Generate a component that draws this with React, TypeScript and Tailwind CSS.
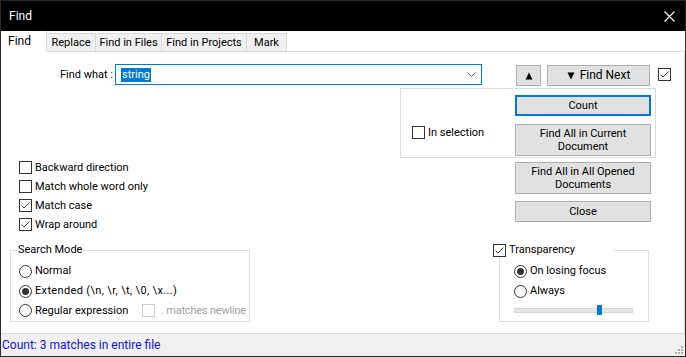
import React from 'react';

const Check = ({ checked, disabled }: { checked?: boolean; disabled?: boolean }) => (
  <span
    className={
      disabled
        ? 'flex h-[13px] w-[13px] shrink-0 items-center justify-center border border-[#cccccc] bg-white'
        : 'flex h-[13px] w-[13px] shrink-0 items-center justify-center border border-[#333333] bg-white'
    }
  >
    {checked && (
      <svg width="11" height="11" viewBox="0 0 11 11">
        <polyline points="1.5,5.5 4,8 9.5,2.5" fill="none" stroke="#3a3a3a" strokeWidth="1" />
      </svg>
    )}
  </span>
);

const Radio = ({ on }: { on?: boolean }) => (
  <span className="flex h-[13px] w-[13px] shrink-0 items-center justify-center rounded-full border border-[#333333] bg-white">
    {on && <span className="h-[7px] w-[7px] rounded-full bg-[#333333]" />}
  </span>
);

const Btn = ({ children, className }: { children: React.ReactNode; className: string }) => (
  <div className={`flex items-center justify-center whitespace-nowrap text-center leading-[13px] ${className}`}>{children}</div>
);

const Row = ({ children }: { children: React.ReactNode }) => (
  <div className="flex h-[19px] items-center gap-[3px] whitespace-nowrap">{children}</div>
);

export default function App() {
  const tabs = [
    { label: 'Replace', w: 'w-[49px]' },
    { label: 'Find in Files', w: 'w-[66px]' },
    { label: 'Find in Projects', w: 'w-[85px]' },
    { label: 'Mark', w: 'w-[40px]' },
  ];

  return (
    <div className="flex h-[357px] w-[686px] flex-col overflow-hidden border border-[#2b2b2b] bg-white font-['Roboto',sans-serif] text-[11px] leading-[16px] text-black">
      {/* title bar */}
      <div className="flex h-[30px] shrink-0 items-center justify-between bg-black pl-[8px] pr-[10px] text-[12px] text-white">
        <span>Find</span>
        <svg width="11" height="11" viewBox="0 0 11 11">
          <path d="M0.5 0.5 L10.5 10.5 M10.5 0.5 L0.5 10.5" stroke="#ffffff" strokeWidth="1.1" />
        </svg>
      </div>

      {/* tabs */}
      <div className="flex h-[20px] shrink-0 items-end whitespace-nowrap">
        <div className="relative z-10 mb-[-1px] flex h-[21px] w-[46px] items-center border-r border-[#d9d9d9] bg-white pl-[7px] pb-[2px] text-[12px]">
          Find
        </div>
        {tabs.map((t) => (
          <div
            key={t.label}
            className={`flex h-[18px] items-center justify-center border-t border-r border-[#d9d9d9] bg-[#f0f0f0] ${t.w}`}
          >
            {t.label}
          </div>
        ))}
      </div>

      {/* panel */}
      <div className="flex flex-1 flex-col border-t border-r border-[#d9d9d9]">
        {/* find what row */}
        <div className="mt-[12px] flex h-[21px] items-start whitespace-nowrap">
          <div className="flex h-[21px] w-[112px] items-center justify-end">Find what :</div>
          <div className="ml-[2px] flex h-[21px] w-[367px] items-center justify-between border border-[#0078d7] pl-[5px] pr-[5px]">
            <span className="bg-[#0078d7] px-[1px] leading-[14px] text-white">string</span>
            <svg width="9" height="5" viewBox="0 0 9 5">
              <polyline points="0.5,0.5 4.5,4.5 8.5,0.5" fill="none" stroke="#606060" strokeWidth="1" />
            </svg>
          </div>
          <Btn className="ml-[34px] mt-[1px] h-[21px] w-[25px] border border-[#adadad] bg-[#e1e1e1]">
            <svg width="8" height="8" viewBox="0 0 8 8">
              <polygon points="4,0.5 7.5,7.5 0.5,7.5" fill="#000000" />
            </svg>
          </Btn>
          <Btn className="ml-[6px] mt-[1px] h-[21px] w-[103px] gap-[5px] border border-[#adadad] bg-[#e1e1e1] text-[12px]">
            <svg width="8" height="8" viewBox="0 0 8 8">
              <polygon points="0.5,0.5 7.5,0.5 4,7.5" fill="#000000" />
            </svg>
            <span>Find Next</span>
          </Btn>
          <div className="ml-[8px] mt-[4px]">
            <Check checked />
          </div>
        </div>

        <div className="flex flex-1">
          {/* left column */}
          <div className="flex w-[399px] flex-col">
            <div className="ml-[18px] mt-[73px] flex flex-col">
              <Row>
                <Check />
                <span>Backward direction</span>
              </Row>
              <Row>
                <Check />
                <span>Match whole word only</span>
              </Row>
              <Row>
                <Check checked />
                <span>Match case</span>
              </Row>
              <Row>
                <Check checked />
                <span>Wrap around</span>
              </Row>
            </div>
            <fieldset className="ml-[9px] mt-[8px] h-[80px] w-[240px] min-w-0 border border-[#dcdcdc] p-0">
              <legend className="ml-[6px] whitespace-nowrap px-[1px]">Search Mode</legend>
              <div className="flex flex-col whitespace-nowrap pl-[8px] pt-[3px]">
                <div className="flex h-[20px] items-center gap-[3px]">
                  <Radio />
                  <span>Normal</span>
                </div>
                <div className="flex h-[20px] items-center gap-[3px]">
                  <Radio on />
                  <span className="tracking-[0.35px]">Extended (\n, \r, \t, \0, \x...)</span>
                </div>
                <div className="flex h-[19px] items-center gap-[3px]">
                  <Radio />
                  <span className="w-[104px]">Regular expression</span>
                  <span className="flex items-center gap-[6px] text-[#a0a0a0]">
                    <Check disabled />
                    <span className="tracking-[-0.2px]">. matches newline</span>
                  </span>
                </div>
              </div>
            </fieldset>
          </div>

          {/* right column */}
          <div className="flex flex-col">
            <div className="mt-[3px] flex h-[70px] w-[256px] border border-[#dcdcdc]">
              <div className="w-[114px] pl-[11px] pt-[37px]">
                <div className="flex h-[13px] items-center gap-[3px] whitespace-nowrap">
                  <Check />
                  <span>In selection</span>
                </div>
              </div>
              <div className="flex flex-col gap-[8px] pt-[6px]">
                <Btn className="h-[21px] w-[136px] border-2 border-[#0078d7] bg-[#e1e1e1]">Count</Btn>
                <Btn className="h-[32px] w-[136px] border border-[#adadad] bg-[#e1e1e1]">
                  Find All in Current
                  <br />
                  Document
                </Btn>
              </div>
            </div>
            <Btn className="ml-[115px] mt-[4px] h-[32px] w-[136px] border border-[#adadad] bg-[#e1e1e1]">
              Find All in All Opened
              <br />
              Documents
            </Btn>
            <Btn className="ml-[115px] mt-[7px] h-[21px] w-[136px] border border-[#adadad] bg-[#e1e1e1]">Close</Btn>

            <fieldset className="ml-[99px] mt-[20px] h-[80px] w-[150px] min-w-0 border border-[#dcdcdc] p-0">
              <legend className="ml-[-7px] w-[121px]">
                <span className="flex items-center gap-[3px] whitespace-nowrap bg-white">
                  <Check checked />
                  <span>Transparency</span>
                </span>
              </legend>
              <div className="flex flex-col whitespace-nowrap pl-[14px] pt-[3px]">
                <div className="flex h-[20px] items-center gap-[3px]">
                  <Radio on />
                  <span>On losing focus</span>
                </div>
                <div className="flex h-[20px] items-center gap-[3px]">
                  <Radio />
                  <span>Always</span>
                </div>
                <div className="mt-[4px] flex h-[10px] w-[119px] items-center">
                  <div className="relative h-[5px] w-full border border-[#d6d6d6] bg-[#e7e7e7]">
                    <div className="absolute left-[82px] top-[-4px] h-[10px] w-[5px] bg-[#0078d7]" />
                  </div>
                </div>
              </div>
            </fieldset>
          </div>
        </div>
      </div>

      {/* status bar */}
      <div className="flex h-[23px] shrink-0 items-center justify-between border-t border-[#dadada] bg-[#f0f0f0] pl-[1px]">
        <span className="whitespace-nowrap text-[12px] text-[#1010f0]">Count: 3 matches in entire file</span>
        <svg width="10" height="10" viewBox="0 0 10 10" className="mb-[1px] mr-[1px] self-end">
          <rect x="7" y="1" width="2" height="2" fill="#b0b0b0" />
          <rect x="4" y="4" width="2" height="2" fill="#b0b0b0" />
          <rect x="7" y="4" width="2" height="2" fill="#b0b0b0" />
          <rect x="1" y="7" width="2" height="2" fill="#b0b0b0" />
          <rect x="4" y="7" width="2" height="2" fill="#b0b0b0" />
          <rect x="7" y="7" width="2" height="2" fill="#b0b0b0" />
        </svg>
      </div>
    </div>
  );
}
